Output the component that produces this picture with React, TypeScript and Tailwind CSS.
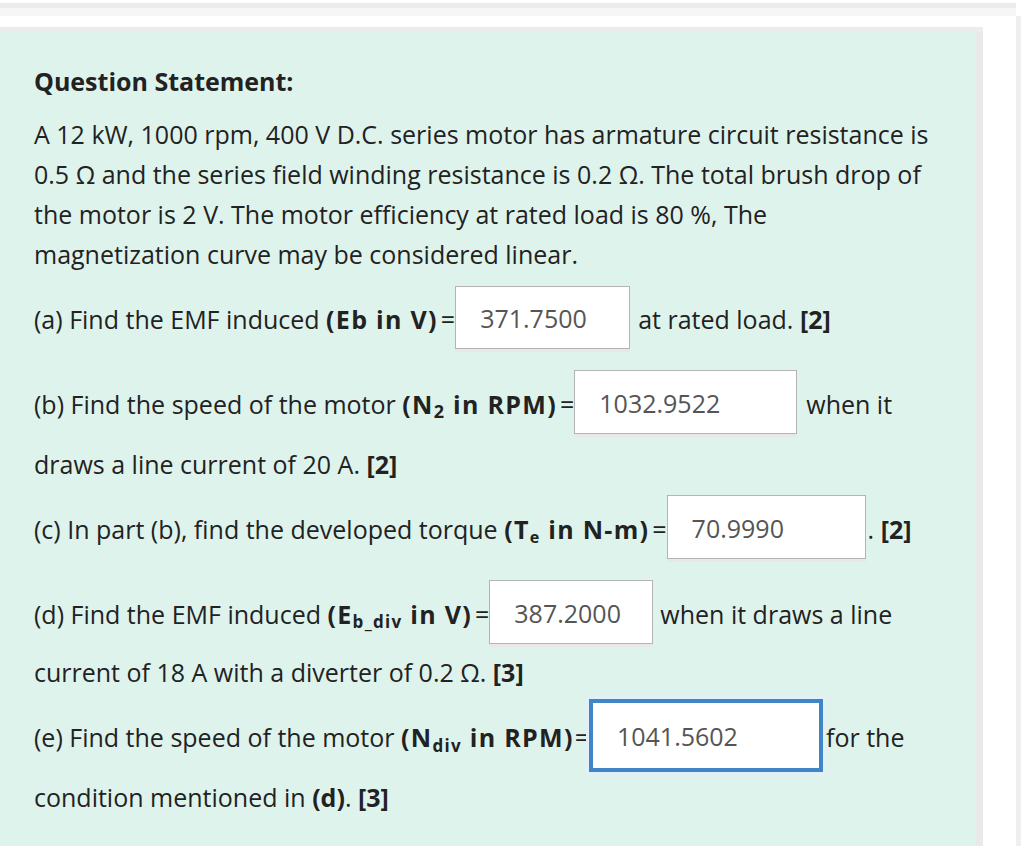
const font = { fontFamily: '"Open Sans", "Noto Sans", sans-serif' };

function Answer({ value, width, focused = false }: { value: string; width: string; focused?: boolean }) {
  const border = focused
    ? 'border-4 border-[#3f86c6] pl-[24px] shadow-[0_0_0_3px_#e3f0fa]'
    : 'border border-[#b4b4b4] pl-[24px] shadow-[0_3px_0_#e8e8e8]';
  return (
    <div className={`flex items-center pt-[3px] bg-white text-[#555] ${width} ${border}`}>
      {value}
    </div>
  );
}

export default function App() {
  return (
    <div className="w-[1031px] h-[846px] bg-white overflow-hidden relative text-[#222] text-[25px]" style={font}>
      <div className="h-[3px] bg-white" />
      <div className="h-[5px] bg-[#ececec] w-[1016px]" />
      <div className="h-[8px] bg-[#f6f6f6] w-[1016px]" />
      <div className="flex">
        <div className="w-[983px]">
          <div className="h-[11px]" />
          <div className="h-[5px] bg-[#ececec]" />
          <div className="flex">
            <div className="w-[976px] h-[900px] bg-[#dff3ed] pl-[34px] pt-[32px]">
              <div className="font-bold leading-[34px]">Question Statement:</div>
              <div className="mt-[16px] leading-[40px]">
                <div>A 12 kW, 1000 rpm, 400 V D.C. series motor has armature circuit resistance is</div>
                <div>0.5 Ω and the series field winding resistance is 0.2 Ω. The total brush drop of</div>
                <div>the motor is 2 V. The motor efficiency at rated load is 80 %, The</div>
                <div>magnetization curve may be considered linear.</div>
              </div>

              <div className="mt-[12px] flex items-stretch h-[63px]">
                <span className="self-center pt-[5px]">
                  (a) Find the EMF induced <b className="tracking-[1.3px]">(Eb in V)</b><span className="ml-[3px]">=</span>
                </span>
                <Answer value="371.7500" width="w-[175px]" />
                <span className="self-center pt-[5px] ml-[8px]">at rated load. <b>[2]</b></span>
              </div>

              <div className="mt-[21px] flex items-stretch h-[64px]">
                <span className="self-center pt-[5px]">
                  (b) Find the speed of the motor{' '}
                  <b className="tracking-[1.3px]">(N<sub className="text-[18px]">2</sub> in RPM)</b>
                  <span className="ml-[3px]">=</span>
                </span>
                <Answer value="1032.9522" width="w-[223px]" />
                <span className="self-center pt-[5px] ml-[9px]">when it</span>
              </div>
              <div className="mt-[10px] leading-[40px]">
                draws a line current of 20 A. <b>[2]</b>
              </div>

              <div className="mt-[11px] flex items-stretch h-[64px]">
                <span className="self-center pt-[5px]">
                  (c) In part (b), find the developed torque{' '}
                  <b className="tracking-[1.3px]">(T<sub className="text-[16px]">e</sub> in N-m)</b>
                  <span className="ml-[3px]">=</span>
                </span>
                <Answer value="70.9990" width="w-[199px]" />
                <span className="self-center pt-[5px] ml-[2px]">. <b>[2]</b></span>
              </div>

              <div className="mt-[21px] flex items-stretch h-[64px]">
                <span className="self-center pt-[5px]">
                  (d) Find the EMF induced{' '}
                  <b className="tracking-[1.3px]">(E<sub className="text-[17px]">b_div</sub> in V)</b>
                  <span className="ml-[3px]">=</span>
                </span>
                <Answer value="387.2000" width="w-[164px]" />
                <span className="self-center pt-[5px] ml-[7px]">when it draws a line</span>
              </div>
              <div className="mt-[8px] leading-[40px]">
                current of 18 A with a diverter of 0.2 Ω. <b>[3]</b>
              </div>

              <div className="mt-[7px] flex items-stretch h-[73px]">
                <span className="self-center pt-[5px]">
                  (e) Find the speed of the motor{' '}
                  <b className="tracking-[1.3px]">(N<sub className="text-[17px]">div</sub> in RPM)</b>
                  <span className="ml-[1px]">=</span>
                </span>
                <Answer value="1041.5602" width="w-[234px]" focused />
                <span className="self-center pt-[5px] ml-[3px]">for the</span>
              </div>
              <div className="mt-[5px] leading-[40px]">
                condition mentioned in <b>(d)</b>. <b>[3]</b>
              </div>
            </div>
            <div className="w-[7px] bg-[#e9e9e9]" />
          </div>
        </div>
        <div className="w-[33px] h-[900px] pl-[33px]">
          <div className="w-[5px] h-full bg-[#efefef]" />
        </div>
      </div>
    </div>
  );
}
